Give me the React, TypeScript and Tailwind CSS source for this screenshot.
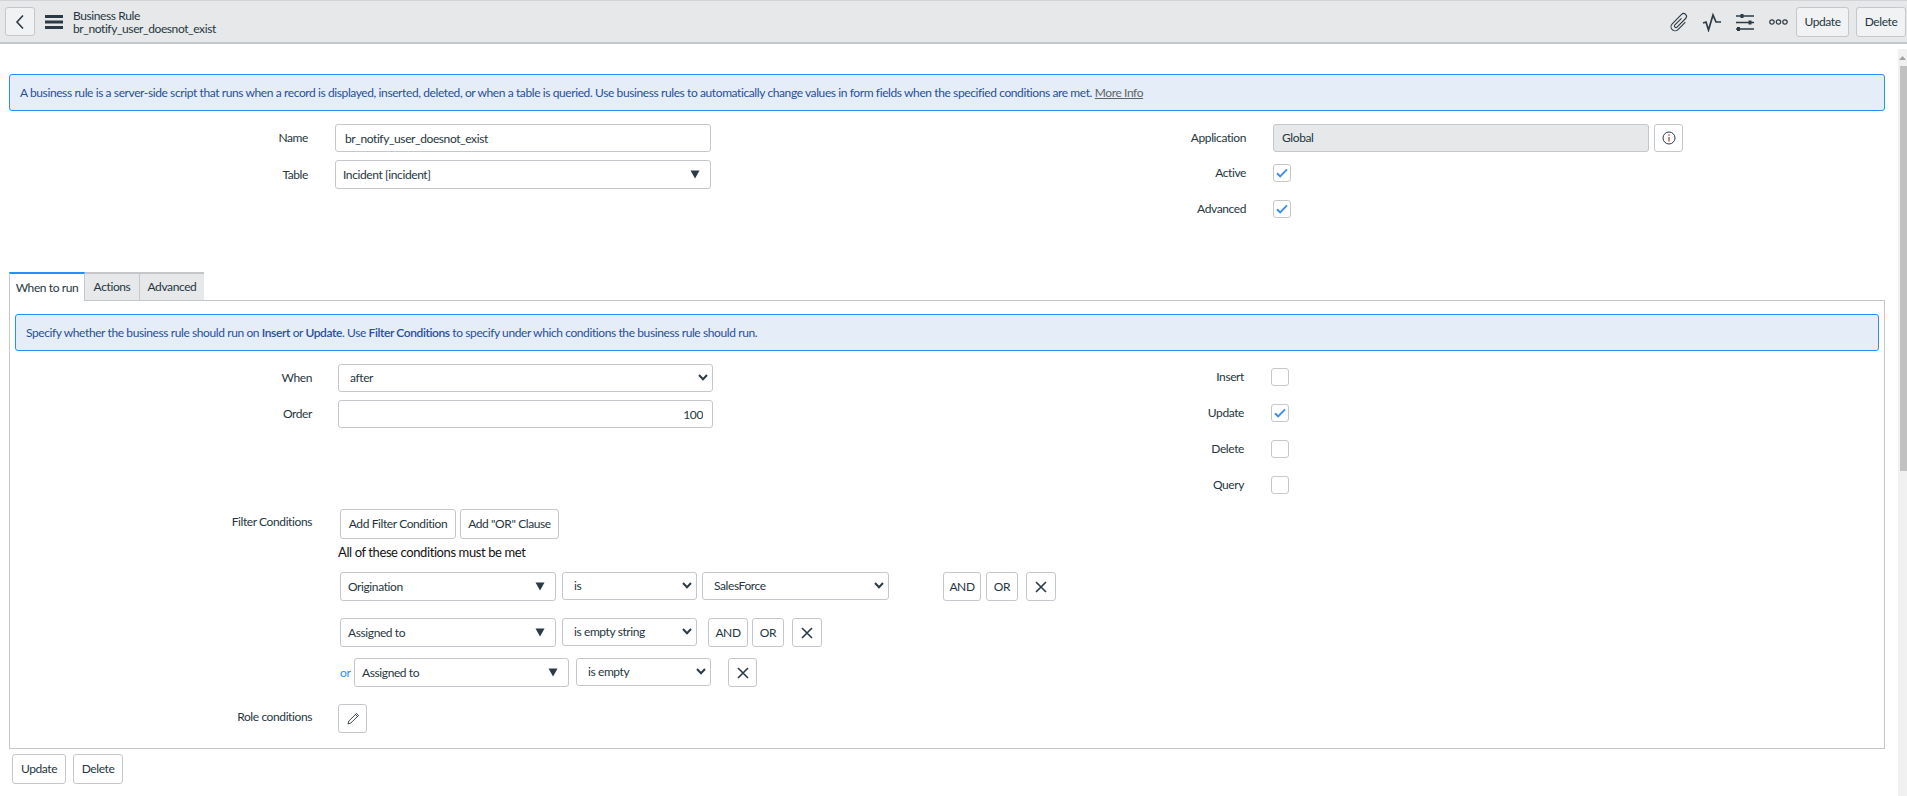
import React from "react";

const btn = "flex items-center justify-center bg-white border border-[#c4c7cb] rounded-[3px] text-[#263640] h-[29px]";

function Check({ on }: { on?: boolean }) {
  return (
    <div className="w-[18px] h-[18px] bg-white border border-[#c4c7cb] rounded-[3px] flex items-center justify-center">
      {on && (
        <svg width="12" height="10" viewBox="0 0 12 10" fill="none">
          <path d="M1 5.2 L4.2 8.4 L11 1.4" stroke="#3f8ef0" strokeWidth="2" />
        </svg>
      )}
    </div>
  );
}

function Label({ children, className = "" }: { children: React.ReactNode; className?: string }) {
  return <div className={"text-right text-[#263640] " + className}>{children}</div>;
}

function Caret() {
  return (
    <svg width="10" height="9" viewBox="0 0 10 9" className="shrink-0">
      <path d="M0.5 0.5 H9.5 L5 8.5 Z" fill="#2b3a45" />
    </svg>
  );
}

function Ref({ text, className = "" }: { text: string; className?: string }) {
  return (
    <div className={"flex items-center justify-between bg-white border border-[#c4c7cb] rounded-[3px] h-[29px] pl-[7px] pr-[10px] text-[#263640] shrink-0 " + className}>
      <span>{text}</span>
      <Caret />
    </div>
  );
}

function Sel({ value, className = "" }: { value: string; className?: string }) {
  return (
    <div className={"relative h-[28px] shrink-0 " + className}>
      <select
        defaultValue={value}
        className="appearance-none w-full h-full bg-white border border-[#c4c7cb] rounded-[3px] pl-[11px] text-[#263640]"
      >
        <option>{value}</option>
      </select>
      <svg width="10" height="7" viewBox="0 0 10 7" fill="none" className="absolute right-[5px] top-[10px] pointer-events-none">
        <path d="M1 1 L5 5.2 L9 1" stroke="#2b3a45" strokeWidth="2" />
      </svg>
    </div>
  );
}

function XBtn({ className = "w-[30px]" }: { className?: string }) {
  return (
    <button className={btn + " shrink-0 " + className}>
      <svg width="12" height="12" viewBox="0 0 12 12" fill="none">
        <path d="M1 1 L11 11 M11 1 L1 11" stroke="#2b3a45" strokeWidth="1.6" />
      </svg>
    </button>
  );
}

export default function App() {
  return (
    <div className="w-[1907px] h-[796px] overflow-hidden bg-white flex flex-col font-['Lato','Liberation_Sans',sans-serif] text-[12px] tracking-[-0.4px]">
      <header className="h-[44px] shrink-0 bg-[#e6e8ea] border-t border-t-[#d2d4d7] border-b-2 border-b-[#c4c6c9] flex items-center pl-[5px] pr-[1px]">
        <button className="w-[30px] h-[29px] bg-[#f1f2f4] border border-[#c4c7cb] rounded-[3px] flex items-center justify-center">
          <svg width="10" height="16" viewBox="0 0 10 16" fill="none">
            <path d="M8 1.5 L2 8 L8 14.5" stroke="#2b3a45" strokeWidth="1.6" />
          </svg>
        </button>
        <svg width="18" height="14" viewBox="0 0 18 14" className="ml-[10px]">
          <rect x="0" y="0" width="18" height="3" fill="#2b3a45" />
          <rect x="0" y="5.5" width="18" height="3" fill="#2b3a45" />
          <rect x="0" y="11" width="18" height="3" fill="#2b3a45" />
        </svg>
        <div className="ml-[10px] leading-[13px] text-[#263640] flex flex-col gap-[0px]">
          <div>Business Rule</div>
          <div>br_notify_user_doesnot_exist</div>
        </div>
        <div className="ml-auto flex items-center">
          <svg width="22" height="22" viewBox="0 0 20 20" fill="none" className="mr-[12px]">
            <g transform="rotate(45 10 10)">
              <path d="M9.2 6 V14.5 a1.4 1.4 0 0 0 2.8 0 V3.5 a2.6 2.6 0 0 0 -5.2 0 V15.5 a3.7 3.7 0 0 0 7.4 0 V6" stroke="#2b3a45" strokeWidth="1" />
            </g>
          </svg>
          <svg width="20" height="20" viewBox="0 0 20 20" fill="none" className="mr-[14px]">
            <path d="M1 11 L4 10 L6.5 18 L11 3 L14 10 H19" stroke="#2b3a45" strokeWidth="1.7" />
          </svg>
          <svg width="18" height="18" viewBox="0 0 18 18" className="mr-[15px]">
            <path d="M0 3 H18 M0 9.5 H18 M0 16 H18" stroke="#2b3a45" strokeWidth="1.3" />
            <rect x="4.5" y="1" width="3" height="4" fill="#2b3a45" />
            <rect x="12.5" y="7.5" width="3" height="4" fill="#2b3a45" />
            <rect x="1" y="14" width="3" height="4" fill="#2b3a45" />
          </svg>
          <svg width="19" height="6" viewBox="0 0 19 6" fill="none" className="mr-[8px]">
            <circle cx="3" cy="3" r="2.2" stroke="#2b3a45" strokeWidth="1.2" />
            <circle cx="9.5" cy="3" r="2.2" stroke="#2b3a45" strokeWidth="1.2" />
            <circle cx="16" cy="3" r="2.2" stroke="#2b3a45" strokeWidth="1.2" />
          </svg>
          <button className={btn + " w-[53px] !bg-[#f1f2f4] mr-[7px] !h-[30px]"}>Update</button>
          <button className={btn + " w-[50px] !bg-[#f1f2f4] !h-[30px]"}>Delete</button>
        </div>
      </header>

      <div className="flex-1 flex min-h-0">
        <main className="w-[1876px] ml-[9px] shrink-0">
          <div className="mt-[30px] h-[37px] bg-[#e4edf8] border border-[#278efc] rounded-[3px] flex items-center pl-[10px] text-[#2a4f9b]">
            <span>
              A business rule is a server-side script that runs when a record is displayed, inserted, deleted, or when a table is queried. Use business rules to automatically change values in form fields when the specified conditions are met. <span className="underline text-[#5f6468]">More Info</span>
            </span>
          </div>

          <div className="mt-[13px] h-[148px] flex">
            <div className="w-[702px] shrink-0 flex flex-col gap-[8px]">
              <div className="flex items-center">
                <Label className="w-[299px]">Name</Label>
                <input readOnly value="br_notify_user_doesnot_exist" className="ml-[27px] w-[376px] h-[28px] bg-white border border-[#c4c7cb] rounded-[3px] px-[9px] text-[#263640]" />
              </div>
              <div className="flex items-center">
                <Label className="w-[299px]">Table</Label>
                <Ref text="Incident [incident]" className="ml-[27px] w-[376px]" />
              </div>
            </div>
            <div className="flex-1">
              <div className="flex items-center h-[28px]">
                <Label className="w-[535px]">Application</Label>
                <div className="ml-[27px] w-[376px] h-[28px] bg-[#e6e8ea] border border-[#c4c7cb] rounded-[3px] flex items-center pl-[8px] text-[#263640]">Global</div>
                <button className={btn + " ml-[5px] w-[29px] !h-[28px]"}>
                  <svg width="14" height="14" viewBox="0 0 14 14" fill="none">
                    <circle cx="7" cy="7" r="6" stroke="#2b3a45" strokeWidth="1" />
                    <path d="M7 6 V10.5" stroke="#a83a3a" strokeWidth="1.2" />
                    <circle cx="7" cy="4" r="0.8" fill="#a83a3a" />
                  </svg>
                </button>
              </div>
              <div className="flex items-center mt-[12px] h-[18px]">
                <Label className="w-[535px]">Active</Label>
                <div className="ml-[27px]"><Check on /></div>
              </div>
              <div className="flex items-center mt-[18px] h-[18px]">
                <Label className="w-[535px]">Advanced</Label>
                <div className="ml-[27px]"><Check on /></div>
              </div>
            </div>
          </div>

          <div className="flex h-[29px] -mb-[1px] relative z-10 text-[#263640]">
            <div className="w-[76px] bg-white border-t-2 border-t-[#278efc] border-r border-r-[#c4c7cb] border-l border-l-[#c4c7cb] flex items-center justify-center">When to run</div>
            <div className="w-[55px] bg-[#e6e8ea] border-t-2 border-t-[#c4c6c9] border-r border-r-[#c4c7cb] border-b border-b-[#c4c7cb] flex items-center justify-center">Actions</div>
            <div className="w-[64px] bg-[#e6e8ea] border-t-2 border-t-[#c4c6c9] border-b border-b-[#c4c7cb] flex items-center justify-center">Advanced</div>
          </div>

          <div className="h-[449px] border border-[#c4c7cb] px-[5px] pt-[13px]">
            <div className="h-[37px] bg-[#e4edf8] border border-[#278efc] rounded-[3px] flex items-center pl-[10px] text-[#2a4f9b]">
              <span>
                Specify whether the business rule should run on <b className="font-semibold">Insert</b> or <b className="font-semibold">Update</b>. Use <b className="font-semibold">Filter Conditions</b> to specify under which conditions the business rule should run.
              </span>
            </div>

            <div className="flex mt-[13px] h-[130px]">
              <div className="w-[297px] shrink-0">
                <Label className="h-[28px] flex items-center justify-end">When</Label>
                <Label className="mt-[8px] h-[28px] flex items-center justify-end">Order</Label>
              </div>
              <div className="ml-[26px] w-[375px] shrink-0">
                <Sel value="after" className="w-[375px]" />
                <input readOnly value="100" className="block mt-[8px] w-[375px] h-[28px] bg-white border border-[#c4c7cb] rounded-[3px] px-[9px] text-right text-[#263640]" />
              </div>
              <div className="ml-[531px] flex flex-col gap-[18px] pt-[4px]">
                {[
                  ["Insert", false],
                  ["Update", true],
                  ["Delete", false],
                  ["Query", false],
                ].map(([t, on]) => (
                  <div key={t as string} className="flex items-center h-[18px]">
                    <Label className="w-[0px] flex justify-end whitespace-nowrap mr-[27px]">{t as string}</Label>
                    <Check on={on as boolean} />
                  </div>
                ))}
              </div>
            </div>

            <div className="flex mt-[15px]">
              <Label className="w-[297px] shrink-0 h-[26px] flex items-center justify-end">Filter Conditions</Label>
              <div className="ml-[26px] flex-1">
                <div className="flex gap-[4px] ml-[2px]">
                  <button className={btn + " w-[116px] !h-[30px]"}>Add Filter Condition</button>
                  <button className={btn + " w-[99px] !h-[30px]"}>Add "OR" Clause</button>
                </div>
                <div className="mt-[5px] h-[18px] flex items-center text-[13px] text-[#111]">All of these conditions must be met</div>
                <div className="flex items-start ml-[2px] mt-[10px]">
                  <Ref text="Origination" className="w-[216px]" />
                  <Sel value="is" className="ml-[6px] w-[135px]" />
                  <Sel value="SalesForce" className="ml-[5px] w-[187px]" />
                  <button className={btn + " ml-[54px] w-[38px] shrink-0"}>AND</button>
                  <button className={btn + " ml-[5px] w-[32px] shrink-0"}>OR</button>
                  <XBtn className="ml-[8px] w-[30px]" />
                </div>
                <div className="flex items-start ml-[2px] mt-[17px]">
                  <Ref text="Assigned to" className="w-[216px]" />
                  <Sel value="is empty string" className="ml-[6px] w-[135px]" />
                  <button className={btn + " ml-[11px] w-[40px] shrink-0"}>AND</button>
                  <button className={btn + " ml-[4px] w-[32px] shrink-0"}>OR</button>
                  <XBtn className="ml-[8px] w-[30px]" />
                </div>
                <div className="flex items-start ml-[2px] mt-[11px]">
                  <span className="w-[14px] h-[29px] flex items-center text-[#278efc]">or</span>
                  <Ref text="Assigned to" className="w-[215px]" />
                  <Sel value="is empty" className="ml-[7px] w-[135px]" />
                  <XBtn className="ml-[17px] w-[29px]" />
                </div>
              </div>
            </div>

            <div className="flex mt-[17px]">
              <Label className="w-[297px] shrink-0 h-[26px] flex items-center justify-end">Role conditions</Label>
              <button className={btn + " ml-[26px] w-[29px]"}>
                <svg width="14" height="14" viewBox="0 0 14 14" fill="none">
                  <path d="M2 12 L2.8 9 L10.5 1.5 L12.5 3.5 L4.8 11 Z M9.5 2.5 L11.5 4.5" stroke="#2b3a45" strokeWidth="0.9" />
                </svg>
              </button>
            </div>
          </div>
          <div className="flex gap-[7px] mt-[5px] ml-[3px]">
            <button className={btn + " w-[54px] !h-[30px]"}>Update</button>
            <button className={btn + " w-[50px] !h-[30px]"}>Delete</button>
          </div>
        </main>
        <aside className="ml-[13px] mt-[5px] w-[9px] bg-[#f1f1f1] flex flex-col items-end">
          <div className="h-[17px] w-full flex items-center justify-center">
            <svg width="7" height="4" viewBox="0 0 7 4"><path d="M0 4 L3.5 0 L7 4 Z" fill="#a3a3a3" /></svg>
          </div>
          <div className="w-[7px] h-[405px] bg-[#c1c1c1]" />
        </aside>
      </div>
    </div>
  );
}
